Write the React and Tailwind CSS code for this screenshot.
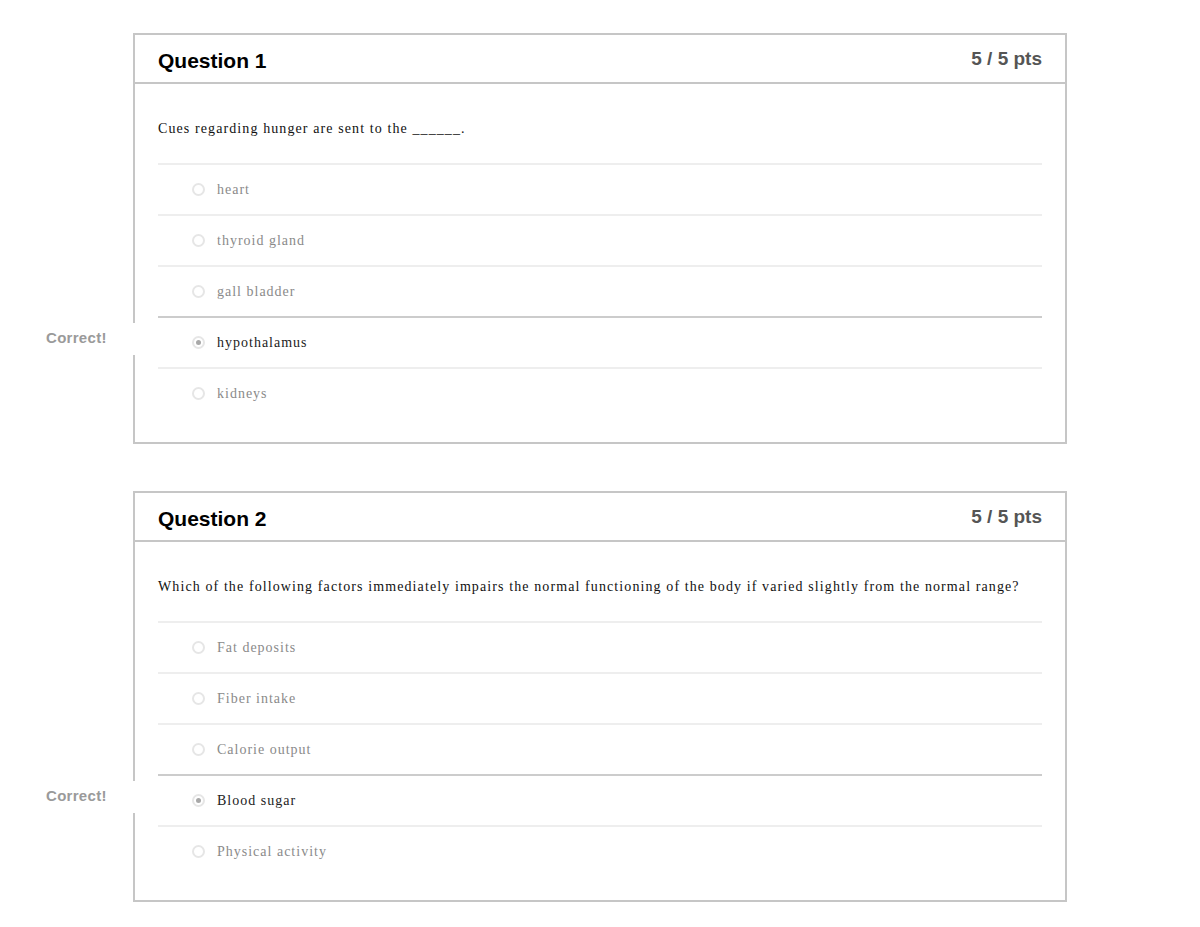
const questions = [
    {
        id: 1,
        title: 'Question 1',
        points: '5 / 5 pts',
        text: 'Cues regarding hunger are sent to the ______.',
        answers: ['heart', 'thyroid gland', 'gall bladder', 'hypothalamus', 'kidneys'],
        correct: 3
    },
    {
        id: 2,
        title: 'Question 2',
        points: '5 / 5 pts',
        text: 'Which of the following factors immediately impairs the normal functioning of the body if varied slightly from the normal range?',
        answers: ['Fat deposits', 'Fiber intake', 'Calorie output', 'Blood sugar', 'Physical activity'],
        correct: 3
    }
]

const serif = { fontFamily: '"Liberation Serif", "Times New Roman", serif' }

const Radio = ({ checked }) => (
    <span className="flex h-[13px] w-[13px] items-center justify-center rounded-full border-2 border-[#e6e6e6] bg-white">
        {checked && <span className="h-[5px] w-[5px] rounded-full bg-[#a8a8a8]" />}
    </span>
)

const AnswerRow = ({ label, isCorrect }) => (
    <div
        className={`relative flex h-[51px] items-center border-t-2 ${
            isCorrect ? 'border-[#cccccc]' : 'border-[#eeeeee]'
        }`}
    >
        {isCorrect && (
            <div className="absolute left-[-128px] top-[5px] flex h-[32px] w-[106px] items-center bg-white pb-[2px] pl-[16px]">
                <span className="font-['Liberation_Sans',Arial,sans-serif] text-[15px] font-bold tracking-[0.3px] text-[#9a9a9a]">
                    Correct!
                </span>
            </div>
        )}
        <div className="ml-[34px] flex items-center gap-[12px]">
            <Radio checked={isCorrect} />
            <span
                style={serif}
                className={`text-[14px] tracking-[1px] ${isCorrect ? 'text-[#222]' : 'text-[#8a8a8a]'}`}
            >
                {label}
            </span>
        </div>
    </div>
)

const QuestionCard = ({ question }) => (
    <section className="w-[934px] border-2 border-[#c6c6c6] bg-white">
        <header className="flex h-[49px] items-center justify-between border-b-2 border-[#c6c6c6] px-[23px] font-['Liberation_Sans',Arial,sans-serif]">
            <h2 className="pt-[4px] text-[21px] font-bold text-black">{question.title}</h2>
            <span className="pt-[2px] text-[19px] font-bold text-[#555]">{question.points}</span>
        </header>

        <div className="px-[23px] pb-[24px] pt-[34px]">
            <p style={serif} className="mb-[24px] text-[14px] tracking-[1.1px] text-[#111]">
                {question.text}
            </p>

            {question.answers.map((answer, i) => (
                <AnswerRow key={answer} label={answer} isCorrect={i === question.correct} />
            ))}
        </div>
    </section>
)

export default function App() {
    return (
        <main className="min-h-[927px] bg-white pt-[33px]">
            <div className="ml-[133px] flex flex-col gap-[47px]">
                {questions.map((q) => (
                    <QuestionCard key={q.id} question={q} />
                ))}
            </div>
        </main>
    )
}
